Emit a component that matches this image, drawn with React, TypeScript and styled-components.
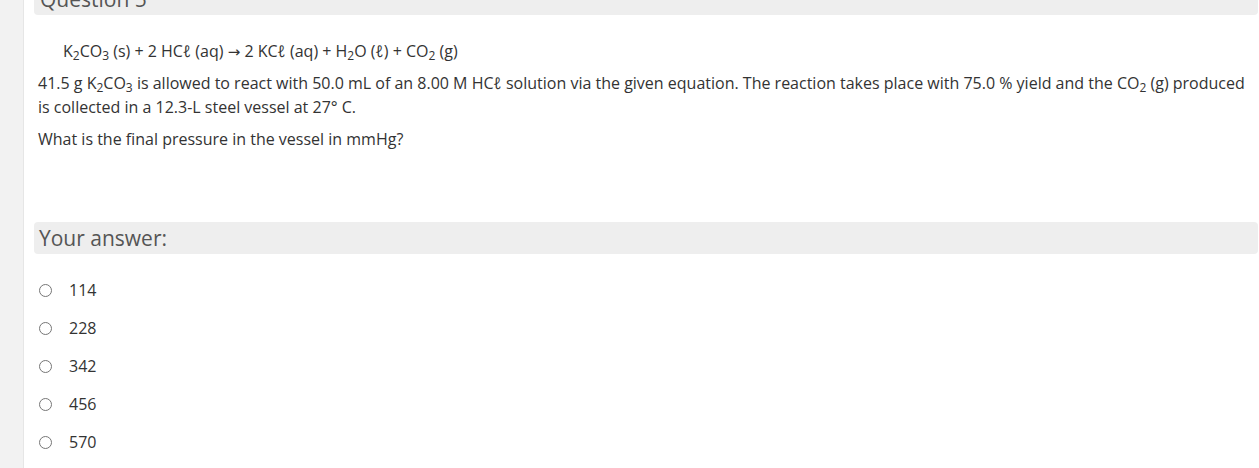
import React from "react";
import styled, { createGlobalStyle } from "styled-components";

const GlobalStyle = createGlobalStyle`
  html, body {
    margin: 0;
    padding: 0;
    background: #f2f2f2;
    font-family: "Open Sans", "Liberation Sans", sans-serif;
    color: #333;
  }
`;

const Page = styled.div`
  display: flex;
  height: 468px;
  overflow: hidden;
`;

const Gutter = styled.div`
  width: 23px;
  flex: none;
  background: #f2f2f2;
  border-right: 1px solid #e6e6e6;
`;

const Card = styled.div`
  flex: 1;
  background: #fff;
  padding: 0 1px 0 10px;
`;

const Header = styled.div`
  background: #eee;
  border-radius: 0 0 4px 4px;
  height: 15px;
  overflow: hidden;
  position: relative;
`;

const HeaderText = styled.h3`
  margin: 0;
  position: absolute;
  left: 6px;
  bottom: 1px;
  font-size: 21px;
  font-weight: 400;
  color: #555;
  line-height: 30px;
`;

const Body = styled.div`
  padding: 24px 0 0 4px;
  font-size: 16px;
  line-height: 24px;
`;

const Equation = styled.p`
  margin: 0 0 7px 25px;
`;

const Para = styled.p`
  margin: 0 0 8px;
`;

const Sub = styled.sub`
  font-size: 12px;
  vertical-align: -3px;
  line-height: 0;
`;

const Arrow = styled.span`
  font-family: "DejaVu Sans", sans-serif;
  font-size: 15px;
`;

const AnswerBar = styled.div`
  margin-top: 71px;
  background: #eee;
  border-radius: 4px;
  height: 32px;
  display: flex;
  align-items: center;
  padding-left: 5px;
  font-size: 21px;
  color: #555;
`;

const Options = styled.div`
  display: flex;
  flex-direction: column;
  gap: 14px;
  padding: 24px 0 0 5px;
`;

const Option = styled.label`
  display: flex;
  align-items: center;
  height: 24px;
  font-size: 16px;
  color: #333;
`;

const Radio = styled.span`
  width: 11px;
  height: 11px;
  border: 1.5px solid #767676;
  border-radius: 50%;
  margin-right: 17px;
  flex: none;
`;

const ClearLink = styled.div`
  padding: 10px 0 0 9px;
  font-size: 16px;
  color: #2d5aa8;
`;

const choices = ["114", "228", "342", "456", "570"];

export default function App() {
  return (
    <>
      <GlobalStyle />
      <Page>
        <Gutter />
        <Card>
          <Header>
            <HeaderText>Question 5</HeaderText>
          </Header>
          <Body>
            <Equation>
              K<Sub>2</Sub>CO<Sub>3</Sub> (s) + 2 HCℓ (aq) <Arrow>→</Arrow> 2 KCℓ (aq) + H<Sub>2</Sub>O (ℓ) + CO
              <Sub>2</Sub> (g)
            </Equation>
            <Para>
              41.5 g K<Sub>2</Sub>CO<Sub>3</Sub> is allowed to react with 50.0 mL of an 8.00 M HCℓ solution via the given
              equation. The reaction takes place with 75.0 % yield and the CO<Sub>2</Sub> (g) produced is collected in a
              12.3-L steel vessel at 27° C.
            </Para>
            <Para>What is the final pressure in the vessel in mmHg?</Para>
          </Body>
          <AnswerBar>Your answer:</AnswerBar>
          <Options>
            {choices.map((c) => (
              <Option key={c}>
                <Radio />
                {c}
              </Option>
            ))}
          </Options>
          <ClearLink>Clear my choice</ClearLink>
        </Card>
      </Page>
    </>
  );
}
